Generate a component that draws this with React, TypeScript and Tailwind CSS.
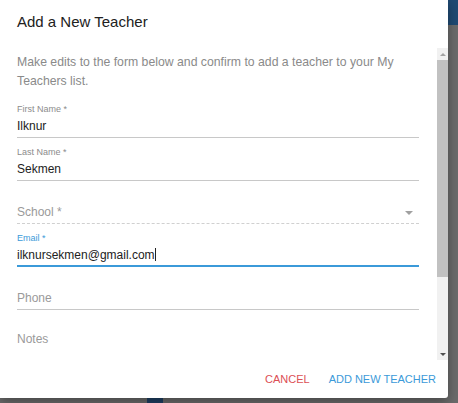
import React from 'react';

const font = { fontFamily: '"Liberation Sans", Arial, sans-serif' };

function Field({ label, value, placeholder, active, select, dashed }: {
  label?: string; value?: string; placeholder?: string; active?: boolean; select?: boolean; dashed?: boolean;
}) {
  const line = active
    ? 'border-b-2 border-[#3b9ad9] pb-[2px]'
    : dashed
      ? 'border-b border-dashed border-[#d0d0d0] pb-[3px]'
      : 'border-b border-[#c8c8c8] pb-[3px]';
  return (
    <div className={`relative ${line}`}>
      <div className={`h-[11px] text-[9px] leading-[11px] ${active ? 'text-[#3b9ad9]' : 'text-[#8c8c8c]'}`}>
        {label}
      </div>
      <div className="mt-[3px] h-[16px] text-[12px] leading-[16px]">
        {value ? (
          <span className="text-[#222]">
            {value}
            {active && <span className="inline-block w-px h-[13px] bg-[#222] align-[-2px]" />}
          </span>
        ) : (
          <span className="text-[#9a9a9a]">{placeholder}</span>
        )}
      </div>
      {select && (
        <div className="absolute right-[6px] top-[21px] w-0 h-0 border-l-[4px] border-r-[4px] border-t-[4px] border-l-transparent border-r-transparent border-t-[#a0a0a0]" />
      )}
    </div>
  );
}

export default function App() {
  return (
    <div className="relative w-[458px] h-[403px] bg-[#6b6b6b] overflow-hidden" style={font}>
      {/* backdrop bits */}
      <div className="absolute right-0 top-0 w-[10px] h-[25px] bg-[#1f4a73]" />
      <div className="absolute left-[147px] bottom-0 w-[16px] h-[5px] bg-[#1f3f63]" />

      <div className="relative w-[448px] h-[398px] bg-white rounded-br-[3px] shadow-[0_4px_12px_rgba(0,0,0,0.35)] flex flex-col">
        <div className="h-[48px] shrink-0 px-[17px] pt-[12px]">
          <h2 className="text-[15px] leading-[20px] text-[#212121]">Add a New Teacher</h2>
        </div>

        <div className="flex h-[312px]">
          <div className="flex-1 overflow-hidden pl-[17px] pr-[18px] pt-[5px]">
            <p className="text-[12.25px] leading-[19px] text-[#8a8a8a]">
              Make edits to the form below and confirm to add a teacher to your My Teachers list.
            </p>
            <div className="mt-[13px] flex flex-col gap-[9px]">
              <Field label="First Name *" value="Ilknur" />
              <Field label="Last Name *" value="Sekmen" />
              <Field placeholder="School *" select dashed />
              <Field label="Email *" value="ilknursekmen@gmail.com" active />
              <Field placeholder="Phone" />
              <div className="pt-[12px] text-[12px] leading-[16px] text-[#9a9a9a]">Notes</div>
            </div>
          </div>

          {/* scrollbar */}
          <div className="w-[11px] bg-[#f1f1f1] flex flex-col items-center">
            <div className="h-[12px] flex items-center justify-center">
              <div className="w-0 h-0 border-l-[3px] border-r-[3px] border-b-[3px] border-l-transparent border-r-transparent border-b-[#a3a3a3]" />
            </div>
            <div className="w-full h-[217px] bg-[#c1c1c1]" />
            <div className="flex-1" />
            <div className="h-[12px] flex items-center justify-center">
              <div className="w-0 h-0 border-l-[3px] border-r-[3px] border-t-[3px] border-l-transparent border-r-transparent border-t-[#505050]" />
            </div>
          </div>
        </div>

        <div className="flex-1 flex items-center justify-end gap-[19px] pr-[12px] text-[11px] leading-[14px]">
          <button className="text-[#dc4f55]">CANCEL</button>
          <button className="text-[#3b9ad9]">ADD NEW TEACHER</button>
        </div>
      </div>
    </div>
  );
}
